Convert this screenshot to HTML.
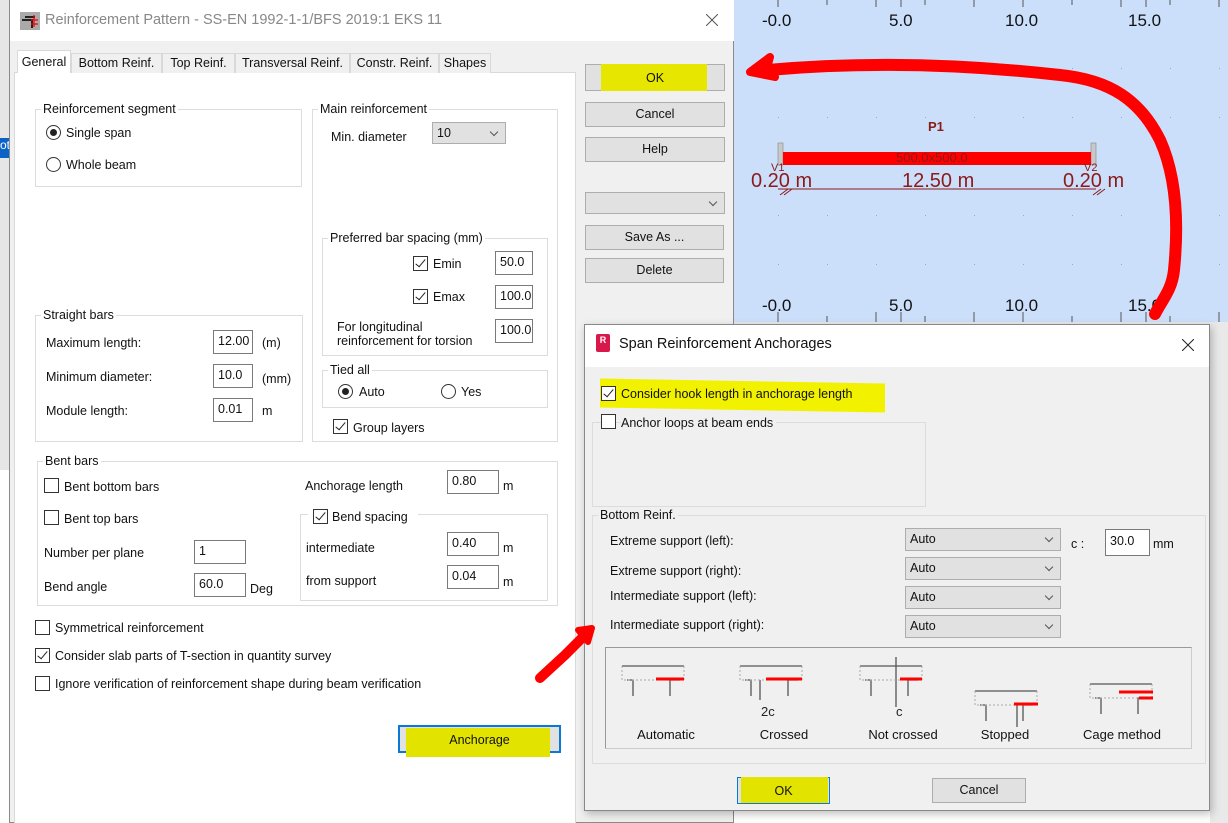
<!DOCTYPE html>
<html><head><meta charset="utf-8"><style>
*{box-sizing:border-box;margin:0;padding:0}
body{width:1228px;height:823px;overflow:hidden;position:relative;background:#f0f0f0;font-family:"Liberation Sans",sans-serif;font-size:12.5px;color:#111}
.a{position:absolute}
.t{position:absolute;white-space:nowrap;line-height:14px}
.gb{position:absolute;border:1px solid #dcdcdc}
.gl{position:absolute;background:inherit;padding:0 2px;white-space:nowrap;line-height:14px;top:-8px;left:5px}
.in{position:absolute;background:#fff;border:1px solid #7a7a7a;padding:2px 0 0 4px;overflow:hidden;white-space:nowrap;line-height:17px}
.cb{position:absolute;width:15px;height:15px;border:1px solid #333;background:#fff}
.cb.c::after{content:"";position:absolute;left:4px;top:0px;width:4px;height:9px;border:solid #222;border-width:0 1.5px 1.5px 0;transform:rotate(40deg)}
.rd{position:absolute;width:15px;height:15px;border:1px solid #333;border-radius:50%;background:#fff}
.rd.c::after{content:"";position:absolute;left:3px;top:3px;width:7px;height:7px;border-radius:50%;background:#222}
.btn{position:absolute;background:#e1e1e1;border:1px solid #adadad;text-align:center;line-height:23px}
.cmb{position:absolute;background:#e1e1e1;border:1px solid #adadad;padding-left:4px;line-height:21px}
.cmb::after{content:"";position:absolute;right:8px;top:6px;width:5px;height:5px;border:solid #555;border-width:0 1px 1px 0;transform:rotate(45deg)}
.tab{position:absolute;top:53px;height:20px;border:1px solid #d9d9d9;border-bottom:none;background:#f0f0f0;text-align:center;line-height:19px}
</style></head><body>
<!-- left strip -->
<div class="a" style="left:0;top:0;width:10px;height:823px;background:#e6e6e6"></div>
<div class="a" style="left:0;top:138px;width:10px;height:20px;background:#0a64c8;color:#fff;font-size:12px">ot</div>
<div class="a" style="left:0;top:470px;width:10px;height:353px;background:#fff;border-right:1px solid #aaa"></div>

<!-- canvas -->
<div class="a" style="left:734px;top:0;width:494px;height:322px;background:#cbdffb"></div>
<div class="a" style="left:734px;top:322px;width:494px;height:501px;background:#e9e9e9"></div>
<div class="a" style="left:734px;top:326px;width:476px;height:497px;background:#fff"></div>
<svg class="a" style="left:734px;top:0" width="494" height="330">
<g stroke="#555" stroke-width="1">
<path d="M44 0v7M93 0v5M142 0v7M167 0v7M191 0v5M240 0v7M289 0v7M338 0v5M387 0v7M412 0v7M436 0v5M485 0v7"/>
<path d="M44 322v-10M93 322v-6M142 322v-10M167 322v-10M191 322v-6M240 322v-10M289 322v-10M338 322v-6M387 322v-10M412 322v-10M436 322v-6M485 322v-10"/>
</g>
<g fill="#8aa8d8">
<rect x="44" y="68" width="1" height="1"/><rect x="93" y="68" width="1" height="1"/><rect x="142" y="68" width="1" height="1"/><rect x="191" y="68" width="1" height="1"/><rect x="240" y="68" width="1" height="1"/><rect x="289" y="68" width="1" height="1"/><rect x="338" y="68" width="1" height="1"/><rect x="387" y="68" width="1" height="1"/><rect x="436" y="68" width="1" height="1"/><rect x="485" y="68" width="1" height="1"/>
<rect x="44" y="117" width="1" height="1"/><rect x="93" y="117" width="1" height="1"/><rect x="142" y="117" width="1" height="1"/><rect x="191" y="117" width="1" height="1"/><rect x="240" y="117" width="1" height="1"/><rect x="289" y="117" width="1" height="1"/><rect x="338" y="117" width="1" height="1"/><rect x="387" y="117" width="1" height="1"/><rect x="436" y="117" width="1" height="1"/><rect x="485" y="117" width="1" height="1"/>
<rect x="44" y="215" width="1" height="1"/><rect x="93" y="215" width="1" height="1"/><rect x="142" y="215" width="1" height="1"/><rect x="191" y="215" width="1" height="1"/><rect x="240" y="215" width="1" height="1"/><rect x="289" y="215" width="1" height="1"/><rect x="338" y="215" width="1" height="1"/><rect x="387" y="215" width="1" height="1"/><rect x="436" y="215" width="1" height="1"/><rect x="485" y="215" width="1" height="1"/>
<rect x="44" y="264" width="1" height="1"/><rect x="93" y="264" width="1" height="1"/><rect x="142" y="264" width="1" height="1"/><rect x="191" y="264" width="1" height="1"/><rect x="240" y="264" width="1" height="1"/><rect x="289" y="264" width="1" height="1"/><rect x="338" y="264" width="1" height="1"/><rect x="387" y="264" width="1" height="1"/><rect x="436" y="264" width="1" height="1"/><rect x="485" y="264" width="1" height="1"/>
</g>
<g font-family="Liberation Sans" font-size="17" fill="#111">
<text x="28" y="26">-0.0</text><text x="155" y="26">5.0</text><text x="271" y="26">10.0</text><text x="394" y="26">15.0</text>
<text x="28" y="311">-0.0</text><text x="155" y="311">5.0</text><text x="271" y="311">10.0</text><text x="394" y="311">15.0</text>
</g>
<rect x="44" y="143" width="5" height="22" fill="#c8c8c8" stroke="#888" stroke-width="0.6"/>
<rect x="357" y="143" width="5" height="22" fill="#c8c8c8" stroke="#888" stroke-width="0.6"/>
<rect x="49" y="152" width="308" height="13" fill="#ff0000"/>
<text x="194" y="131" font-family="Liberation Sans" font-size="13" font-weight="bold" fill="#8b1a1a">P1</text>
<text x="162" y="162" font-family="Liberation Sans" font-size="13" fill="#8b1a1a">500.0x500.0</text>
<line x1="44" y1="189" x2="362" y2="189" stroke="#8b1a1a" stroke-width="1"/>
<g font-family="Liberation Sans" font-size="20" fill="#8b1a1a">
<text x="17" y="187">0.20 m</text><text x="168" y="187">12.50 m</text><text x="329" y="187">0.20 m</text>
<text x="37" y="171" font-size="11">V1</text><text x="350" y="171" font-size="11">V2</text>
</g>
<path d="M46 195l8-6M50 195l8-6M359 195l8-6M363 195l8-6" stroke="#8b1a1a"/>
</svg>
<svg class="a" style="left:0;top:0;pointer-events:none;z-index:5" width="1228" height="823">
<path d="M1155 314 C1162 300 1172 290 1174 270 C1178 230 1178 180 1160 140 C1140 100 1110 80 1060 75 C980 66 880 60 768 70" fill="none" stroke="#ff0000" stroke-width="12" stroke-linecap="round"/>
<path d="M750 72 L770 57 L766 72 L775 77 Z" fill="#f00" stroke="#f00" stroke-width="8" stroke-linejoin="round"/>
</svg>

<!-- dialog 1 -->
<div class="a" style="left:9px;top:0;width:725px;height:823px;background:#f0f0f0;border:1px solid #8a8a8a;border-top:none">
 <div class="a" style="left:0;top:0;width:724px;height:41px;background:#fff"></div>
</div>
<svg class="a" style="left:20px;top:12px" width="20" height="18"><rect x="0" y="0" width="20" height="18" fill="#aaa"/><path d="M2 8h10v8M5 5h10" stroke="#222" stroke-width="2" fill="none"/><path d="M14 3v12M11 8h7M11 12h7" stroke="#e00" stroke-width="1.2"/></svg>
<div class="t" style="left:45px;top:13px;font-size:14.5px;color:#888">Reinforcement Pattern - SS-EN 1992-1-1/BFS 2019:1 EKS 11</div>
<svg class="a" style="left:706px;top:14px" width="12" height="12"><path d="M0 0L12 12M12 0L0 12" stroke="#555" stroke-width="1"/></svg>

<!-- tab panel -->
<div class="a" style="left:14px;top:72px;width:562px;height:751px;background:#fff;border:1px solid #d9d9d9;border-bottom:none"></div>
<div class="tab" style="left:17px;top:50px;height:23px;width:54px;background:#fff;line-height:22px">General</div>
<div class="tab" style="left:71px;width:91px">Bottom Reinf.</div>
<div class="tab" style="left:162px;width:73px">Top Reinf.</div>
<div class="tab" style="left:235px;width:115px">Transversal Reinf.</div>
<div class="tab" style="left:350px;width:89px">Constr. Reinf.</div>
<div class="tab" style="left:439px;width:52px">Shapes</div>

<div style="position:absolute;left:0;top:0;background:#fff">
<div class="gb" style="left:35px;top:109px;width:267px;height:78px;background:#fff"><span class="gl">Reinforcement segment</span></div>
<div class="rd c" style="left:46px;top:125px"></div><div class="t" style="left:66px;top:126px">Single span</div>
<div class="rd" style="left:46px;top:157px"></div><div class="t" style="left:66px;top:158px">Whole beam</div>

<div class="gb" style="left:312px;top:109px;width:246px;height:333px;background:#fff"><span class="gl">Main reinforcement</span></div>
<div class="t" style="left:331px;top:130px">Min. diameter</div>
<div class="cmb" style="left:432px;top:122px;width:74px;height:22px">10</div>
<div class="gb" style="left:322px;top:238px;width:226px;height:118px;background:#fff"><span class="gl">Preferred bar spacing (mm)</span></div>
<div class="cb c" style="left:413px;top:256px"></div><div class="t" style="left:433px;top:257px">Emin</div>
<div class="in" style="left:495px;top:251px;width:38px;height:24px">50.0</div>
<div class="cb c" style="left:413px;top:289px"></div><div class="t" style="left:433px;top:290px">Emax</div>
<div class="in" style="left:495px;top:285px;width:38px;height:24px">100.0</div>
<div class="t" style="left:337px;top:320px">For longitudinal<br>reinforcement for torsion</div>
<div class="in" style="left:495px;top:319px;width:38px;height:24px">100.0</div>
<div class="gb" style="left:322px;top:370px;width:226px;height:38px;background:#fff"><span class="gl">Tied all</span></div>
<div class="rd c" style="left:338px;top:384px"></div><div class="t" style="left:359px;top:385px">Auto</div>
<div class="rd" style="left:441px;top:384px"></div><div class="t" style="left:461px;top:385px">Yes</div>
<div class="cb c" style="left:333px;top:419px"></div><div class="t" style="left:353px;top:421px">Group layers</div>

<div class="gb" style="left:35px;top:315px;width:268px;height:127px;background:#fff"><span class="gl">Straight bars</span></div>
<div class="t" style="left:46px;top:336px">Maximum length:</div>
<div class="in" style="left:213px;top:330px;width:40px;height:24px">12.00</div><div class="t" style="left:262px;top:336px">(m)</div>
<div class="t" style="left:46px;top:370px">Minimum diameter:</div>
<div class="in" style="left:213px;top:364px;width:40px;height:24px">10.0</div><div class="t" style="left:262px;top:372px">(mm)</div>
<div class="t" style="left:46px;top:404px">Module length:</div>
<div class="in" style="left:213px;top:398px;width:40px;height:24px">0.01</div><div class="t" style="left:262px;top:404px">m</div>

<div class="gb" style="left:37px;top:461px;width:521px;height:145px;background:#fff"><span class="gl">Bent bars</span></div>
<div class="cb" style="left:44px;top:478px"></div><div class="t" style="left:64px;top:480px">Bent bottom bars</div>
<div class="cb" style="left:44px;top:510px"></div><div class="t" style="left:64px;top:512px">Bent top bars</div>
<div class="t" style="left:44px;top:546px">Number per plane</div>
<div class="in" style="left:194px;top:540px;width:52px;height:24px">1</div>
<div class="t" style="left:44px;top:580px">Bend angle</div>
<div class="in" style="left:194px;top:573px;width:52px;height:24px">60.0</div><div class="t" style="left:250px;top:582px">Deg</div>
<div class="t" style="left:305px;top:479px">Anchorage length</div>
<div class="in" style="left:447px;top:470px;width:52px;height:24px">0.80</div><div class="t" style="left:503px;top:479px">m</div>
<div class="gb" style="left:300px;top:514px;width:248px;height:87px;background:#fff"></div>
<div class="a" style="left:308px;top:508px;width:110px;height:18px;background:#fff"></div>
<div class="cb c" style="left:313px;top:509px"></div><div class="t" style="left:332px;top:510px">Bend spacing</div>
<div class="t" style="left:306px;top:541px">intermediate</div>
<div class="in" style="left:447px;top:532px;width:52px;height:24px">0.40</div><div class="t" style="left:503px;top:541px">m</div>
<div class="t" style="left:306px;top:574px">from support</div>
<div class="in" style="left:447px;top:565px;width:52px;height:24px">0.04</div><div class="t" style="left:503px;top:575px">m</div>

<div class="cb" style="left:35px;top:620px"></div><div class="t" style="left:55px;top:621px">Symmetrical reinforcement</div>
<div class="cb c" style="left:35px;top:648px"></div><div class="t" style="left:55px;top:649px">Consider slab parts of T-section in quantity survey</div>
<div class="cb" style="left:35px;top:676px"></div><div class="t" style="left:55px;top:677px">Ignore verification of reinforcement shape during beam verification</div>
</div>
<div class="btn" style="left:398px;top:725px;width:163px;height:28px;border:2px solid #0a78d7;background:#e1e1e1"></div>
<div class="a" style="left:406px;top:728px;width:144px;height:29px;background:#e3e300"></div>
<div class="t" style="left:398px;top:733px;width:163px;text-align:center">Anchorage</div>

<!-- right buttons -->
<div class="btn" style="left:585px;top:64px;width:140px;height:27px"></div>
<div class="a" style="left:601px;top:64px;width:106px;height:27px;background:#e6e600"></div>
<div class="t" style="left:585px;top:71px;width:140px;text-align:center">OK</div>
<div class="btn" style="left:585px;top:102px;width:140px;height:25px">Cancel</div>
<div class="btn" style="left:585px;top:137px;width:140px;height:25px">Help</div>
<div class="cmb" style="left:585px;top:192px;width:140px;height:22px"></div>
<div class="btn" style="left:585px;top:225px;width:139px;height:25px">Save As ...</div>
<div class="btn" style="left:585px;top:258px;width:139px;height:25px">Delete</div>

<!-- dialog 2 -->
<div class="a" style="left:584px;top:324px;width:626px;height:487px;background:#f0f0f0;border:1px solid #888;box-shadow:2px 3px 8px rgba(0,0,0,.25)">
 <div class="a" style="left:0;top:0;width:624px;height:42px;background:#fff"></div>
</div>
<div class="a" style="left:596px;top:334px;width:14px;height:18px;background:#d8174a;border-radius:2px;color:#fff;font-size:9px;font-weight:bold;text-align:center;line-height:12px">R</div>
<div class="t" style="left:619px;top:337px;font-size:14.5px">Span Reinforcement Anchorages</div>
<svg class="a" style="left:1182px;top:339px" width="12" height="12"><path d="M0 0L12 12M12 0L0 12" stroke="#222" stroke-width="1"/></svg>

<div class="a" style="left:600px;top:381px;width:285px;height:29px;background:#f2f200;transform:skewY(1deg)"></div>
<div class="cb c" style="left:601px;top:386px"></div><div class="t" style="left:621px;top:387px">Consider hook length in anchorage length</div>
<div class="gb" style="left:592px;top:422px;width:334px;height:85px"></div>
<div class="cb" style="left:601px;top:414px"></div><div class="t" style="left:621px;top:416px;background:#f0f0f0;padding-right:3px">Anchor loops at beam ends</div>
<div class="gb" style="left:592px;top:515px;width:614px;height:249px;background:#f0f0f0"><span class="gl">Bottom Reinf.</span></div>
<div class="t" style="left:610px;top:534px">Extreme support (left):</div>
<div class="t" style="left:610px;top:564px">Extreme support (right):</div>
<div class="t" style="left:610px;top:589px">Intermediate support (left):</div>
<div class="t" style="left:610px;top:618px">Intermediate support (right):</div>
<div class="cmb" style="left:905px;top:528px;width:156px;height:23px">Auto</div>
<div class="cmb" style="left:905px;top:557px;width:156px;height:23px">Auto</div>
<div class="cmb" style="left:905px;top:586px;width:156px;height:23px">Auto</div>
<div class="cmb" style="left:905px;top:615px;width:156px;height:23px">Auto</div>
<div class="t" style="left:1071px;top:537px">c :</div>
<div class="in" style="left:1105px;top:529px;width:45px;height:27px;padding-top:3px">30.0</div>
<div class="t" style="left:1153px;top:537px">mm</div>

<div class="a" style="left:605px;top:647px;width:587px;height:102px;border:1px solid #ccc;border-left-color:#999;border-top-color:#999"></div>
<svg class="a" style="left:605px;top:647px" width="587" height="102">
<g stroke="#555" stroke-width="1.3" fill="none">
<path d="M17 19h62M22 33h6v16M75 33h-10v16"/>
<path d="M135 19h62M140 33h6v16M193 33h-10v16M155 33v20"/>
<path d="M255 19h62M260 33h6v16M313 33h-10v16M291 10v50"/>
<path d="M370 44h62M375 58h6v16M428 58h-10v16M412 58v22"/>
<path d="M485 37h62M490 51h6v16M543 51h-10v16"/>
</g>
<g stroke="#aaa" stroke-width="1" stroke-dasharray="2 2" fill="none"><path d="M17 19v14h62v-14M135 19v14h62v-14M255 19v14h62v-14M370 44v14h62v-14M485 37v14h62v-14"/></g>
<g stroke="#f00" stroke-width="3"><path d="M51 32h28M161 32h36M295 32h22M409 57h24M514 45h34M534 51h14"/></g>
<g font-family="Liberation Sans" font-size="13" fill="#222"><text x="156" y="69">2c</text><text x="291" y="69">c</text></g>
<g font-family="Liberation Sans" font-size="13" fill="#111">
<text x="61" y="92" text-anchor="middle">Automatic</text><text x="179" y="92" text-anchor="middle">Crossed</text><text x="298" y="92" text-anchor="middle">Not crossed</text><text x="400" y="92" text-anchor="middle">Stopped</text><text x="517" y="92" text-anchor="middle">Cage method</text>
</g>
</svg>

<div class="btn" style="left:737px;top:777px;width:93px;height:27px;border:1px solid #0a78d7"></div>
<div class="a" style="left:741px;top:777px;width:87px;height:26px;background:#e3e300"></div>
<div class="t" style="left:737px;top:784px;width:93px;text-align:center">OK</div>
<div class="btn" style="left:932px;top:778px;width:94px;height:25px">Cancel</div>

<svg class="a" style="left:530px;top:620px" width="70" height="70"><path d="M10 58 L35 35 L55 15" stroke="#f00" stroke-width="10" stroke-linecap="round" fill="none"/><path d="M48 10 L62 8 L58 22 Z" fill="#f00" stroke="#f00" stroke-width="6" stroke-linejoin="round"/></svg>
</body></html>
